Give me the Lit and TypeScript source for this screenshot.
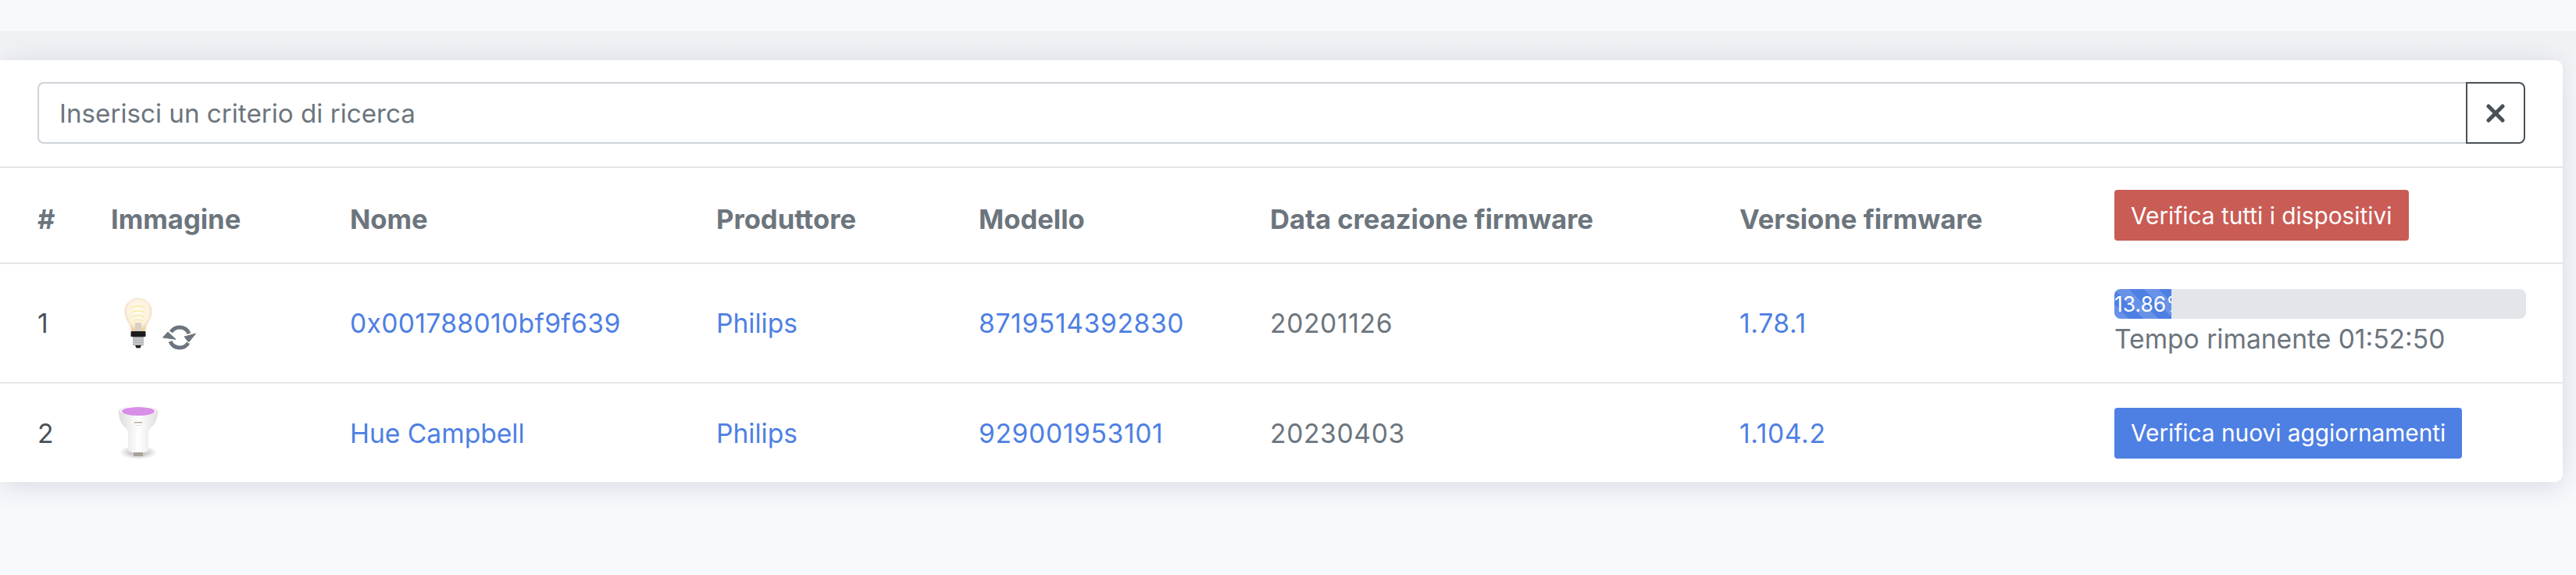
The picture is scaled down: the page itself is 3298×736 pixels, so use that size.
import { LitElement, html, css, svg } from 'lit';
import { customElement } from 'lit/decorators.js';

const filamentBulb = svg`
  <svg class="thumb" width="66" height="70" viewBox="0 0 66 70">
    <defs>
      <radialGradient id="glass" cx="50%" cy="40%" r="60%">
        <stop offset="0" stop-color="#fffdf6"/>
        <stop offset="0.7" stop-color="#fdf0dc"/>
        <stop offset="1" stop-color="#e9cb9c"/>
      </radialGradient>
    </defs>
    <path d="M35 3c9.500 0 17 7 17 16.500 0 7-3 11.500-5.500 16-1.500 3-2.500 6-3 9.500H26.500c-.5-3.500-1.500-6.500-3-9.500-2.500-4.500-5.500-9-5.500-16C18 10 25.500 3 35 3z" fill="url(#glass)" stroke="#f0dfc4" stroke-width="1"/>
    <path d="M26 15c5-3 13-3 18 0M26 21c5-3 13-3 18 0M27 27c5-3 11-3 16 0M29 32c4-2 8-2 12 0" fill="none" stroke="#f7eeb0" stroke-width="2"/>
    <path d="M31 34h8v11h-8z" fill="#d9d1c3"/>
    <rect x="25.500" y="45" width="19" height="7" rx="1" fill="#1d1d1f"/>
    <path d="M28 52h14v11h-14z" fill="#a9acaf"/>
    <path d="M28 55h14M28 58h14M28 61h14" stroke="#e6e7e7" stroke-width="1.200"/>
    <path d="M31 63h8l-1.500 3.500h-5z" fill="#222"/>
  </svg>
`;

const colorBulb = svg`
  <svg class="thumb" width="70" height="70" viewBox="0 0 70 70">
    <defs>
      <linearGradient id="body" x1="0" x2="1" y1="0" y2="0">
        <stop offset="0" stop-color="#dcdcdd"/>
        <stop offset="0.5" stop-color="#ffffff"/>
        <stop offset="1" stop-color="#dfdfe0"/>
      </linearGradient>
      <radialGradient id="shade" cx="50%" cy="50%" r="50%">
        <stop offset="0.4" stop-color="#c9c9c9"/>
        <stop offset="1" stop-color="#ffffff"/>
      </radialGradient>
    </defs>
    <ellipse cx="35" cy="60" rx="24" ry="9" fill="url(#shade)"/>
    <path d="M10 8c0-5 10-7 25-7s25 2 25 7c0 7-2 15-8 20-3 2.500-4 5-4 9v20c0 2-6 4-13 4s-13-2-13-4V37c0-4-1-6.500-4-9-6-5-8-13-8-20z" fill="url(#body)"/>
    <ellipse cx="35" cy="7" rx="23" ry="6" fill="#fff"/>
    <ellipse cx="35" cy="7.500" rx="21" ry="5.500" fill="#d98ee8"/>
    <rect x="30" y="21" width="10" height="1.500" fill="#b9a98f"/>
    <rect x="31" y="25" width="8" height="1" fill="#e3dccb"/>
    <path d="M29 60h12v5H29z" fill="#a9a49a"/>
  </svg>
`;

const syncIcon = svg`
  <svg class="sync" width="43" height="33" viewBox="0 0 43 33">
    <path d="M11 9A13 13 0 0 1 34 11M33 23A13 13 0 0 1 10 21" fill="none" stroke="#6c757d" stroke-width="5"/>
    <path d="M28 15L42.500 11 33.500 22zM17 18.300L.5 16 7 9z" fill="#6c757d" stroke="#6c757d" stroke-width="1" stroke-linejoin="round"/>
  </svg>
`;

@customElement('app-root')
export class AppRoot extends LitElement {
  static styles = css`
    :host {
      display: block;
      height: 736px;
      overflow: hidden;
      background: #f8f9fd;
      font-family: Inter, 'Liberation Sans', sans-serif;
      color: #495057;
    }
    .content {
      margin-top: 40px;
      padding: 37px 17px 60px 0;
      overflow: hidden;
      background: linear-gradient(#eef0f3, #f8f9fd 64px) no-repeat;
    }
    .card {
      background: #fff;
      border-radius: 0 10px 10px 0;
      box-shadow: 0 4px 36px rgba(33, 40, 50, 0.16);
    }
    .search {
      display: flex;
      padding: 28px 48px 29px;
      border-bottom: 2px solid #e3e6ea;
    }
    .search input {
      flex: 1;
      height: 79px;
      box-sizing: border-box;
      padding: 0 26px;
      border: 2px solid #ced4da;
      border-right: none;
      border-radius: 8px 0 0 8px;
      font: 400 33.2px Inter, sans-serif;
      color: #495057;
      outline: none;
      background: #fff;
    }
    .search input::placeholder {
      color: #6c757d;
      opacity: 1;
    }
    .clear {
      width: 76px;
      height: 79px;
      box-sizing: border-box;
      display: flex;
      align-items: center;
      justify-content: center;
      padding: 0;
      background: #fff;
      border: 2px solid #495057;
      border-radius: 0 8px 8px 0;
    }
    table {
      width: 100%;
      table-layout: fixed;
      border-collapse: collapse;
      font-size: 33.6px;
      color: #6c757d;
    }
    th {
      box-sizing: border-box;
      height: 122px;
      padding: 8px 24px 0;
      text-align: left;
      font-size: 34.6px;
      font-weight: 700;
      color: #6c757d;
      border-bottom: 2px solid #e3e6ea;
      white-space: nowrap;
    }
    th:last-child {
      padding-top: 0;
    }
    td {
      padding: 0 24px;
      vertical-align: middle;
      white-space: nowrap;
    }
    td:first-child {
      color: #495057;
    }
    td:last-child {
      padding-right: 47px;
    }
    tr.first td {
      height: 151px;
      border-bottom: 2px solid #e3e6ea;
    }
    tr.last td {
      height: 126px;
    }
    th:first-child,
    td:first-child {
      padding-left: 48px;
    }
    a {
      color: #4e7fe3;
      text-decoration: none;
    }
    .num {
      letter-spacing: 0.65px;
    }
    .hex {
      letter-spacing: 0.35px;
    }
    .image {
      display: flex;
      align-items: flex-end;
    }
    .thumb {
      display: block;
      flex: none;
      filter: blur(0.5px);
    }
    .sync {
      display: block;
    }
    .btn {
      display: inline-block;
      height: 65px;
      box-sizing: border-box;
      padding: 0 21px;
      border: none;
      border-radius: 4px;
      color: #fff;
      font: 400 29.8px Inter, sans-serif;
    }
    .btn.red {
      background: #c95c55;
    }
    .btn.blue {
      background: #4e7fe3;
    }
    .progress {
      height: 38px;
      border-radius: 8px;
      background: #e2e6ea;
      overflow: hidden;
      font-size: 26.4px;
      line-height: 38px;
      color: #fff;
    }
    .bar {
      height: 100%;
      overflow: hidden;
      background-color: #4e7fe3;
      background-image: linear-gradient(
        45deg,
        rgba(255, 255, 255, 0.15) 25%,
        transparent 25%,
        transparent 50%,
        rgba(255, 255, 255, 0.15) 50%,
        rgba(255, 255, 255, 0.15) 75%,
        transparent 75%,
        transparent
      );
      background-size: 38px 38px;
    }
    .remaining {
      margin-top: 2px;
      line-height: 48px;
      color: #6c757d;
    }
  `;

  render() {
    return html`
      <div class="content">
        <div class="card">
          <div class="search">
            <input type="text" placeholder="Inserisci un criterio di ricerca" />
            <button class="clear" aria-label="Cancella">
              <svg width="24" height="24" viewBox="0 0 24 24">
                <path d="M3 3l18 18M21 3L3 21" stroke="#495057" stroke-width="5" stroke-linecap="round" />
              </svg>
            </button>
          </div>
          <table>
            <colgroup>
              <col style="width:118px" />
              <col style="width:306px" />
              <col style="width:469px" />
              <col style="width:336px" />
              <col style="width:373px" />
              <col style="width:601px" />
              <col style="width:480px" />
              <col style="width:598px" />
            </colgroup>
            <thead>
              <tr>
                <th>#</th>
                <th>Immagine</th>
                <th>Nome</th>
                <th>Produttore</th>
                <th>Modello</th>
                <th>Data creazione firmware</th>
                <th>Versione firmware</th>
                <th><button class="btn red">Verifica tutti i dispositivi</button></th>
              </tr>
            </thead>
            <tbody>
              <tr class="first">
                <td>1</td>
                <td><div class="image">${filamentBulb}${syncIcon}</div></td>
                <td class="hex"><a href="#">0x001788010bf9f639</a></td>
                <td><a href="#">Philips</a></td>
                <td class="num"><a href="#">8719514392830</a></td>
                <td class="num">20201126</td>
                <td class="num"><a href="#">1.78.1</a></td>
                <td>
                  <div class="progress"><div class="bar" style="width:13.86%">13.86%</div></div>
                  <div class="remaining">Tempo rimanente 01:52:50</div>
                </td>
              </tr>
              <tr class="last">
                <td>2</td>
                <td><div class="image">${colorBulb}</div></td>
                <td><a href="#">Hue Campbell</a></td>
                <td><a href="#">Philips</a></td>
                <td class="num"><a href="#">929001953101</a></td>
                <td class="num">20230403</td>
                <td class="num"><a href="#">1.104.2</a></td>
                <td><button class="btn blue">Verifica nuovi aggiornamenti</button></td>
              </tr>
            </tbody>
          </table>
        </div>
      </div>
    `;
  }
}
